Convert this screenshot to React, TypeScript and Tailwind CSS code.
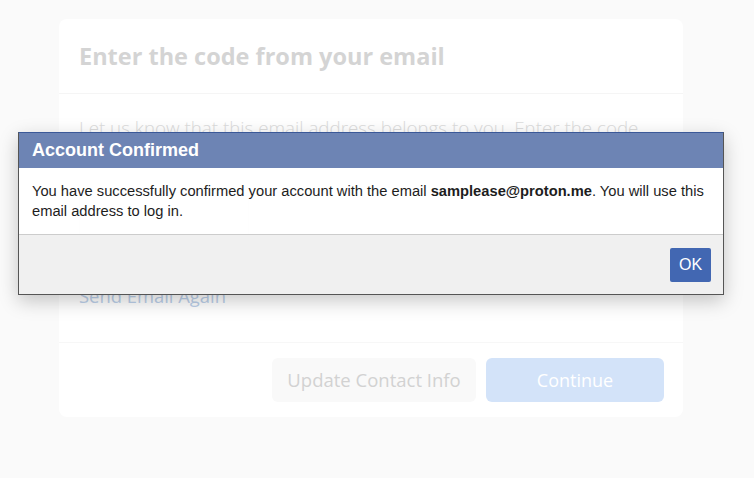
import React from 'react';

const AccountConfirmedDialog = () => {
  return (
    <div
      className="absolute left-[18px] top-[132px] w-[706px] border border-[#555] border-t-[#3b5998] shadow-[0_6px_18px_rgba(0,0,0,0.22)]"
      style={{ fontFamily: '"Liberation Sans", Arial, sans-serif' }}
    >
      <div className="flex h-[35px] items-center bg-[#6d84b4] px-[13px]">
        <span className="text-[18px] font-bold text-white">Account Confirmed</span>
      </div>
      <div className="bg-white/95 px-[13px] py-[13px] text-[14.7px] leading-[20px] text-[#1d1d1d]">
        You have successfully confirmed your account with the email <b>samplease@proton.me</b>. You
        will use this email address to log in.
      </div>
      <div className="flex justify-end border-t border-[#ccc] bg-[#f0f0f0] pt-[13px] pb-[12px] pr-[12px]">
        <button className="flex h-[34px] w-[41px] items-center justify-center rounded-[2px] bg-[#4267b2] text-[16px] text-white">
          OK
        </button>
      </div>
    </div>
  );
};

export default function App() {
  return (
    <div className="relative min-h-[478px] w-full bg-[#fafafa] pt-[19px]" style={{ fontFamily: '"Open Sans", "Noto Sans", sans-serif' }}>
      <div className="ml-[59px] w-[624px] rounded-lg bg-white">
        <div className="flex h-[75px] items-center border-b border-[#f5f5f5] px-[20px] pt-[2px]">
          <h1 className="text-[23.5px] font-bold text-[#d4d4d4]">Enter the code from your email</h1>
        </div>
        <div className="px-[20px] pt-[20px] pb-[34px]">
          <p className="text-[18.8px] font-light leading-[28px] text-[#dcdcdc]">
            Let us know that this email address belongs to you. Enter the code
            <br />
            in the email sent to samplease@proton.me.
          </p>
          <div className="mt-[22px] h-[50px] w-[170px] rounded-[4px] border border-[#ececec]"></div>
          <div className="mt-[42px] text-[18.4px] leading-[24px] text-[#bcd0ea]">Send Email Again</div>
        </div>
        <div className="flex justify-end gap-[10px] border-t border-[#f7f7f7] px-[19px] pt-[15px] pb-[15px]">
          <button className="h-[44px] w-[204px] rounded-md bg-[#f9f9f9] text-[18.5px] text-[#d2d2d2]">
            Update Contact Info
          </button>
          <button className="h-[44px] w-[178px] rounded-md bg-[#d3e3f9] text-[18px] text-white">
            Continue
          </button>
        </div>
      </div>
      <AccountConfirmedDialog />
    </div>
  );
}
